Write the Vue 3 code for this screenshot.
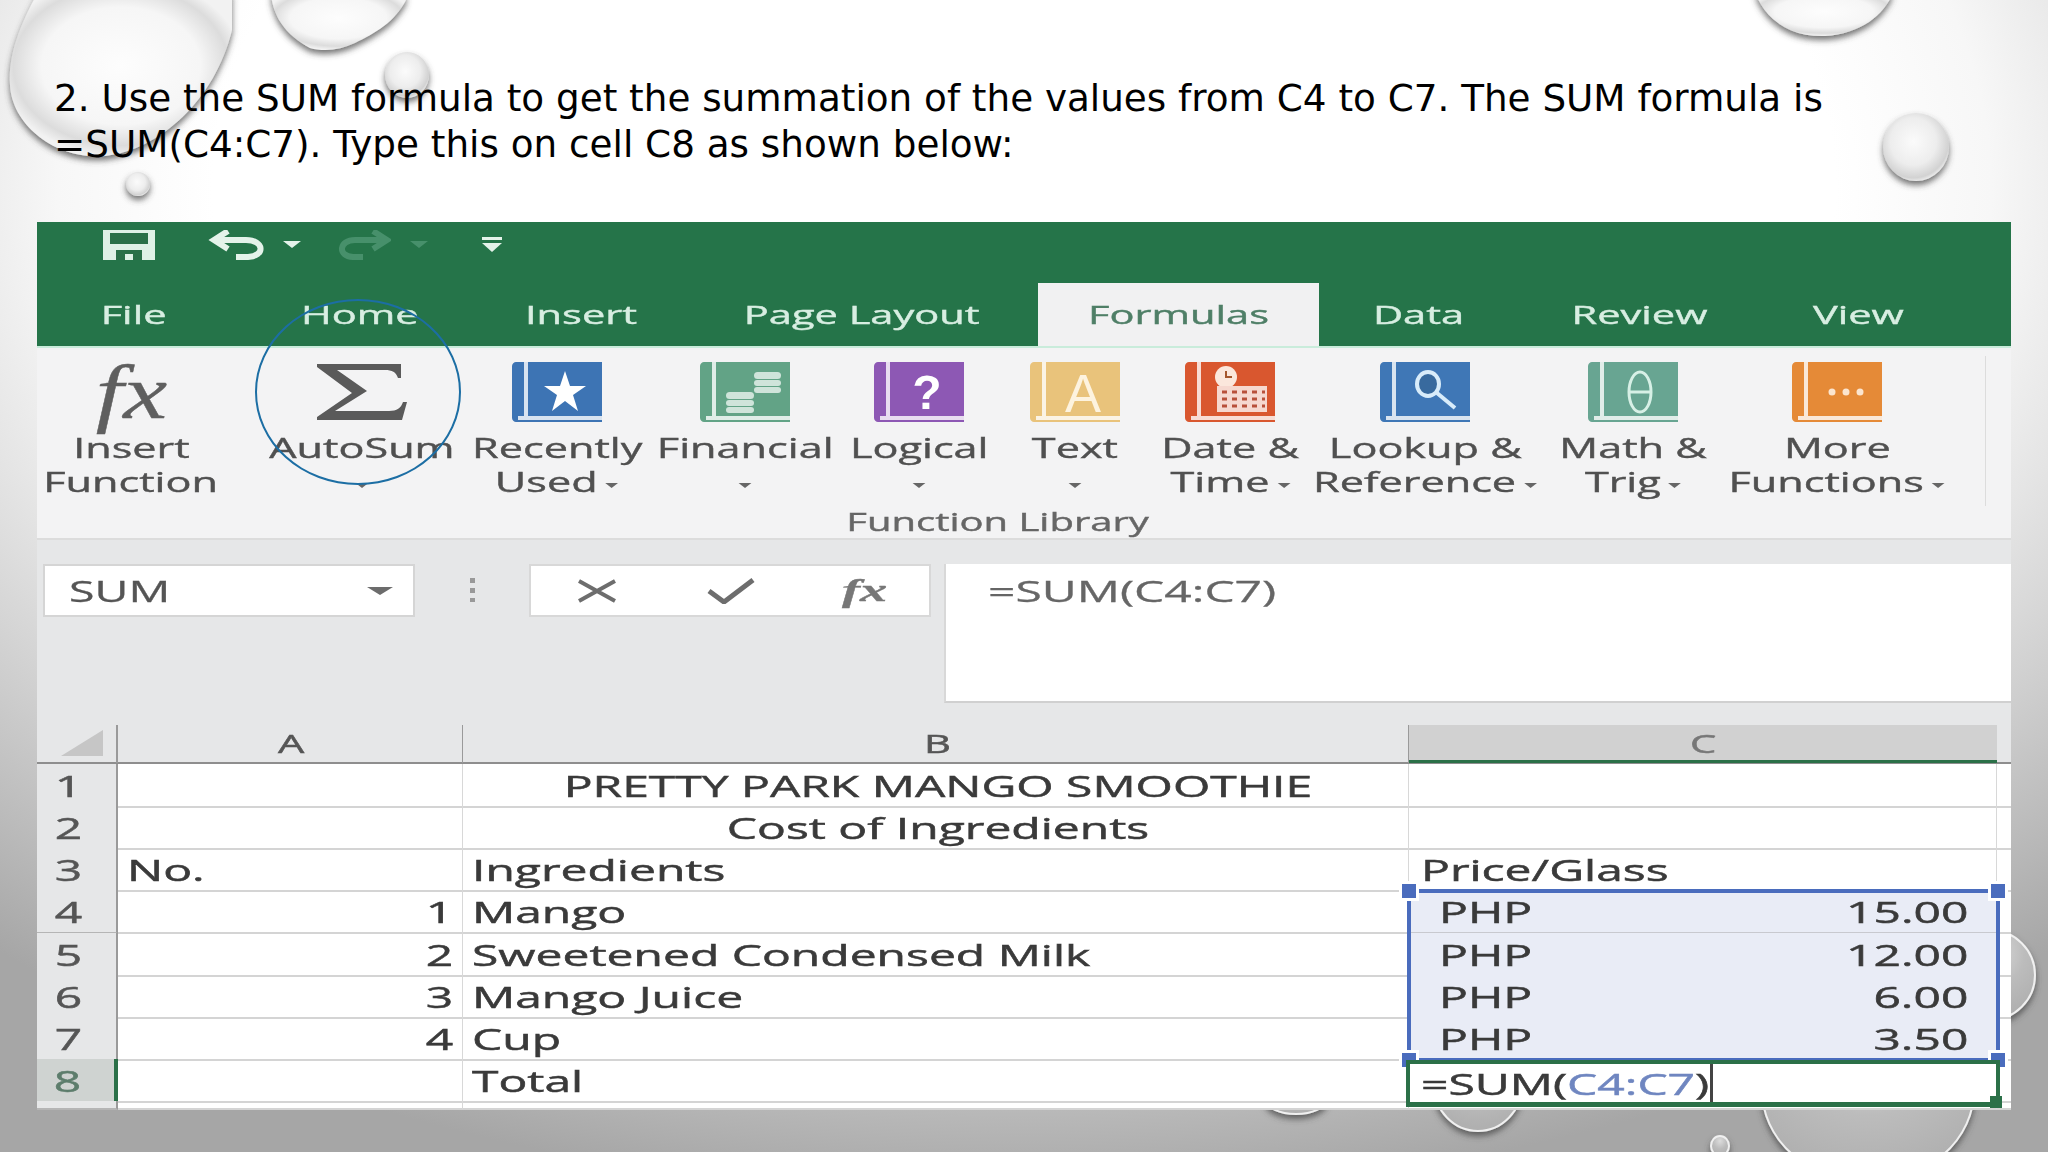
<template>
  <div class="slide">
    <svg class="drops" width="2048" height="1152" viewBox="0 0 2048 1152">
      <defs>
        <radialGradient id="dropFill" cx="50%" cy="45%" r="55%">
          <stop offset="0%" stop-color="#fdfdfd" />
          <stop offset="65%" stop-color="#f6f6f6" />
          <stop offset="88%" stop-color="#dcdcdc" />
          <stop offset="100%" stop-color="#f2f2f2" />
        </radialGradient>
        <radialGradient id="dropSmall" cx="46%" cy="42%" r="58%">
          <stop offset="0%" stop-color="#fbfbfb" />
          <stop offset="60%" stop-color="#ededed" />
          <stop offset="92%" stop-color="#d2d2d2" />
          <stop offset="100%" stop-color="#e8e8e8" />
        </radialGradient>
        <radialGradient id="dropDark" cx="50%" cy="25%" r="70%">
          <stop offset="0%" stop-color="#dcdcdc" />
          <stop offset="55%" stop-color="#bcbcbc" />
          <stop offset="100%" stop-color="#b0b0b0" />
        </radialGradient>
        <filter id="dropShadow" x="-20%" y="-20%" width="140%" height="140%">
          <feDropShadow dx="0" dy="4" stdDeviation="3" flood-color="#444" flood-opacity="0.75" />
        </filter>
      </defs>
      <g filter="url(#dropShadow)" fill="url(#dropFill)">
        <path d="M38 -8C20 25 8 55 10 85C12 125 55 160 105 156C160 150 215 100 232 30L232 -8Z" />
        <path d="M271 -8C272 15 285 35 310 48C325 52 340 50 355 43C375 33 395 22 406 0L406 -8Z" />
        <path d="M1755 -8C1765 20 1790 37 1825 36C1860 34 1885 15 1893 -8Z" />
      </g>
      <g filter="url(#dropShadow)" fill="url(#dropSmall)">
        <ellipse cx="407" cy="75" rx="22" ry="23" />
        <ellipse cx="138" cy="184" rx="12" ry="12" />
        <ellipse cx="1916" cy="147" rx="33" ry="34" />
      </g>
      <g filter="url(#dropShadow)" fill="url(#dropDark)" stroke="#f0f0f0" stroke-width="2">
        <ellipse cx="1990" cy="975" rx="45" ry="45" />
        <ellipse cx="1478" cy="1085" rx="44" ry="46" />
        <ellipse cx="1868" cy="1090" rx="106" ry="92" />
        <ellipse cx="1296" cy="1100" rx="30" ry="14" />
        <ellipse cx="1720" cy="1146" rx="9" ry="10" />
      </g>
    </svg>

    <p class="heading">
      2. Use the SUM formula to get the summation of the values from C4 to C7. The SUM formula is<br />
      =SUM(C4:C7). Type this on cell C8 as shown below:
    </p>

    <div class="panel">
      <div class="title-bar soft">
        <div class="qat">
          <svg class="qat-icon" width="52" height="30" viewBox="0 0 52 30">
            <path fill="#dff1e6" d="M0 0H52V30H0Z" />
            <path fill="#2a7048" d="M7 3H45V14H7Z" />
            <path fill="#2a7048" d="M13 20H39V30H30V24H22V30H13Z" />
          </svg>
          <svg class="undo" width="60" height="30" viewBox="0 0 60 30">
            <path fill="none" stroke="#e4f3ea" stroke-width="6" d="M6 10H38C56 10 58 26 40 27H28" />
            <path fill="none" stroke="#e4f3ea" stroke-width="6" d="M20 1L6 10L20 19" />
          </svg>
          <i class="tri qat-tri first" />
          <svg class="redo" width="54" height="30" viewBox="0 0 54 30">
            <path fill="none" stroke="#47906b" stroke-width="6" d="M48 10H18C2 10 0 26 16 27H26" />
            <path fill="none" stroke="#47906b" stroke-width="6" d="M36 1L50 10L36 19" />
          </svg>
          <i class="tri qat-tri dim" />
          <span class="customize"><b /><i class="tri" /></span>
        </div>
        <div class="tabs">
          <div v-for="tab in tabs" :key="tab" class="tab" :class="{ active: tab === 'Formulas' }">
            <span class="wide">{{ tab }}</span>
          </div>
        </div>
      </div>

      <div class="ribbon soft">
        <div class="ribbon-items">
          <div v-for="item in ribbonItems" :key="item.top" class="tool">
            <div class="tool-icon">
              <span v-if="item.icon === 'fx'" class="fx">fx</span>
              <svg v-else-if="item.icon === 'sum'" width="90" height="56" viewBox="0 0 90 56">
                <path fill="#5a5a5a" d="M0 0H84V14H81C79 8 75 6 68 6H20L50 27L18 47H72C80 47 84 44 86 38H90L85 56H0V53L35 29L0 3Z" />
              </svg>
              <svg v-else width="90" height="60" viewBox="0 0 90 60">
                <path :fill="item.color" d="M4 0H90V60H4C2 60 0 58 0 56V4C0 2 2 0 4 0Z" />
                <path fill="#fff" opacity="0.8" d="M12 0H16V54H90V58H6V54H12Z" />
                <path v-if="item.icon === 'star'" fill="#fff" d="M53 9L58 24L74 24L61 33L66 49L53 39L40 49L45 33L32 24L48 24Z" />
                <g v-if="item.icon === 'coins'" fill="#cfe4da">
                  <rect x="26" y="30" width="28" height="7" rx="3.5" />
                  <rect x="26" y="38" width="28" height="6" rx="3" />
                  <rect x="26" y="45" width="28" height="6" rx="3" />
                  <rect x="54" y="10" width="27" height="7" rx="3.5" />
                  <rect x="54" y="18" width="27" height="6" rx="3" />
                  <rect x="54" y="25" width="27" height="6" rx="3" />
                </g>
                <text v-if="item.icon === 'help'" x="53" y="47" class="book-letter">?</text>
                <text v-if="item.icon === 'letter'" x="53" y="50" class="book-letter thin">A</text>
                <g v-if="item.icon === 'date'">
                  <circle cx="41" cy="15" r="11" fill="#fbe7dc" />
                  <path fill="none" stroke="#a5562c" stroke-width="2" d="M41 9V15H47" />
                  <path fill="#f6d8cf" d="M32 24H82V50H32Z" />
                  <path stroke="#b8503a" stroke-width="3" stroke-dasharray="5 5" d="M37 30H80M37 37H80M37 44H80" />
                </g>
                <g v-if="item.icon === 'search'" fill="none" stroke="#d8ecfa" stroke-width="4">
                  <ellipse cx="48" cy="22" rx="11" ry="12" fill="#386a9e" />
                  <path d="M57 31L75 46" />
                </g>
                <g v-if="item.icon === 'theta'" fill="none" stroke="#d7f0e6" stroke-width="3">
                  <ellipse cx="52" cy="30" rx="11" ry="20" />
                  <path d="M41 30H63" />
                </g>
                <g v-if="item.icon === 'more'" fill="#fbe5cf">
                  <circle cx="40" cy="30" r="3.5" />
                  <circle cx="54" cy="30" r="3.5" />
                  <circle cx="68" cy="30" r="3.5" />
                </g>
              </svg>
            </div>
            <span class="wide tool-line">{{ item.top }}</span>
            <span class="wide tool-line">{{ item.bottom }}<i v-if="item.icon !== 'fx'" class="tri" :class="{ spaced: item.bottom }" /></span>
          </div>
          <div class="ribbon-stub"><span class="stub-mark" /></div>
        </div>
        <div class="group-name"><span class="wide">Function Library</span></div>
      </div>

      <div class="formula-bar soft">
        <div class="name-box">
          <span class="wide left name-text">SUM</span>
          <i class="tri" />
        </div>
        <span class="grip" />
        <div class="fx-box">
          <svg width="42" height="26" viewBox="0 0 42 26">
            <path fill="none" stroke="#6d6d6d" stroke-width="4" d="M3 3L39 23M39 3L3 23" />
          </svg>
          <svg class="check" width="48" height="26" viewBox="0 0 48 26">
            <path fill="none" stroke="#6d6d6d" stroke-width="5" d="M2 13L17 24L46 2" />
          </svg>
          <span class="box-fx">fx</span>
        </div>
        <div class="formula-input"><span class="wide left">=SUM(C4:C7)</span></div>
      </div>

      <div class="sheet soft">
        <div class="head-row">
          <div class="corner">
            <svg width="42" height="26" viewBox="0 0 42 26"><path fill="#c6c6c6" d="M42 0V26H0Z" /></svg>
          </div>
          <div class="col-head"><span class="wide">A</span></div>
          <div class="col-head"><span class="wide">B</span></div>
          <div class="col-head on"><span class="wide">C</span></div>
        </div>
        <div v-for="row in rows" :key="row.id" class="row">
          <div class="row-head" :class="{ on: row.id === 8 }"><span class="wide">{{ row.id }}</span></div>
          <div class="cell" :class="row.aClass"><span class="wide" :class="row.aClass">{{ row.a }}</span></div>
          <div class="cell" :class="row.bClass"><span class="wide" :class="row.bClass">{{ row.b }}</span></div>
          <div class="cell c-cell" :class="{ picked: row.price }">
            <template v-if="row.price">
              <span class="wide left">PHP</span>
              <span class="wide right">{{ row.price }}</span>
            </template>
            <span v-else class="wide left">{{ row.c }}</span>
          </div>
          <div class="cell-end" />
        </div>
        <div class="row last">
          <div class="row-head" />
          <div class="cell" />
          <div class="cell" />
          <div class="cell" />
          <div class="cell-end" />
        </div>

        <div class="range-box">
          <i class="handle tl" /><i class="handle tr" /><i class="handle bl" /><i class="handle br" />
        </div>
        <div class="edit-box">
          <span class="wide left edit-text">=SUM(<em>C4:C7</em>)</span>
          <span class="caret" />
          <i class="fill-handle" />
        </div>
      </div>

      <div class="autosum-ring" />
    </div>
  </div>
</template>

<script setup>
const tabs = ['File', 'Home', 'Insert', 'Page Layout', 'Formulas', 'Data', 'Review', 'View']

const ribbonItems = [
  { top: 'Insert', bottom: 'Function', icon: 'fx' },
  { top: 'AutoSum', bottom: '', icon: 'sum' },
  { top: 'Recently', bottom: 'Used', icon: 'star', color: '#3d74b4' },
  { top: 'Financial', bottom: '', icon: 'coins', color: '#62a386' },
  { top: 'Logical', bottom: '', icon: 'help', color: '#8d58b4' },
  { top: 'Text', bottom: '', icon: 'letter', color: '#e9c37b' },
  { top: 'Date &', bottom: 'Time', icon: 'date', color: '#d9572f' },
  { top: 'Lookup &', bottom: 'Reference', icon: 'search', color: '#3f77b6' },
  { top: 'Math &', bottom: 'Trig', icon: 'theta', color: '#68a592' },
  { top: 'More', bottom: 'Functions', icon: 'more', color: '#e58a37' }
]

const rows = [
  { id: 1, a: '', b: 'PRETTY PARK MANGO SMOOTHIE', bClass: 'center', c: '' },
  { id: 2, a: '', b: 'Cost of Ingredients', bClass: 'center', c: '' },
  { id: 3, a: 'No.', aClass: 'left', b: 'Ingredients', bClass: 'left', c: 'Price/Glass' },
  { id: 4, a: '1', aClass: 'right', b: 'Mango', bClass: 'left', price: '15.00' },
  { id: 5, a: '2', aClass: 'right', b: 'Sweetened Condensed Milk', bClass: 'left', price: '12.00' },
  { id: 6, a: '3', aClass: 'right', b: 'Mango Juice', bClass: 'left', price: '6.00' },
  { id: 7, a: '4', aClass: 'right', b: 'Cup', bClass: 'left', price: '3.50' },
  { id: 8, a: '', b: 'Total', bClass: 'left', c: '' }
]
</script>

<style>
html,
body {
  margin: 0;
  background: #fff;
}
</style>

<style scoped>
.slide {
  position: relative;
  width: 2048px;
  height: 1152px;
  overflow: hidden;
  background: radial-gradient(ellipse 1560px 1010px at 50% 190px, #fff 52%, #f7f7f7 62%, #a6a6a6 100%);
  font-family: "Open Sans", "Liberation Sans", sans-serif;
}

.drops {
  position: absolute;
  left: 0;
  top: 0;
}

.heading {
  position: relative;
  margin: 0;
  height: 222px;
  box-sizing: border-box;
  padding: 75px 0 0 54px;
  font-family: "DejaVu Sans", sans-serif;
  font-size: 37.3px;
  line-height: 46px;
  color: #000;
  white-space: nowrap;
}

.panel {
  position: relative;
  width: 1974px;
  margin-left: 37px;
}

.soft {
  filter: blur(0.5px);
}

.wide {
  display: inline-block;
  transform: scaleX(1.6);
  white-space: nowrap;
}

.wide.left {
  transform-origin: left center;
}

.wide.right {
  transform-origin: right center;
}

.tri {
  display: inline-block;
  width: 0;
  height: 0;
  border-left: 6px solid transparent;
  border-right: 6px solid transparent;
  border-top: 6px solid #666;
  vertical-align: middle;
}

/* title bar */
.title-bar {
  height: 124px;
  background: #257449;
  border-bottom: 2px solid #c9ecdb;
}

.qat {
  display: flex;
  align-items: center;
  height: 45px;
  margin-bottom: 16px;
  padding-left: 66px;
}

.undo {
  margin-left: 53px;
}

.qat-tri {
  margin-left: 19px;
  border-left-width: 9px;
  border-right-width: 9px;
  border-top: 7px solid #e4f3ea;
}

.qat-tri.first {
  margin-left: 15px;
}

.qat-tri.dim {
  border-top-color: #47906b;
}

.redo {
  margin-left: 36px;
}

.customize {
  display: flex;
  flex-direction: column;
  align-items: center;
  gap: 3px;
  margin-left: 54px;
}

.customize b {
  width: 20px;
  height: 3px;
  background: #e4f3ea;
}

.customize .tri {
  border-left-width: 10px;
  border-right-width: 10px;
  border-top: 9px solid #e4f3ea;
}

.tabs {
  display: grid;
  grid-template-columns: 194px 258px 184px 365px 281px 200px 240px 198px;
  height: 63px;
}

.tab {
  display: flex;
  align-items: center;
  justify-content: center;
  padding-bottom: 2px;
  box-sizing: border-box;
  font-size: 26px;
  -webkit-text-stroke: 0.4px currentColor;
  color: #d8eee2;
}

.tab:nth-child(4) {
  padding-left: 12px;
}

.tab.active {
  background: #f1f1f2;
  color: #4f7f67;
}

/* ribbon */
.ribbon {
  height: 192px;
  background: #f3f3f4;
  border-bottom: 2px solid #dcdcdc;
  box-sizing: border-box;
  color: #505050;
  font-size: 27px;
  -webkit-text-stroke: 0.4px currentColor;
}

.ribbon-items {
  display: grid;
  grid-template-columns: 188px 274px 116px 260px 88px 224px 86px 304px 112px 296px 26px;
  height: 158px;
  padding-top: 14px;
  box-sizing: border-box;
}

.tool {
  display: flex;
  flex-direction: column;
  align-items: center;
  min-width: 0;
}

.tool-icon {
  display: flex;
  align-items: center;
  justify-content: center;
  height: 60px;
  margin-bottom: 9px;
}

.tool-line {
  height: 34px;
  line-height: 34px;
}

.tool-line .tri {
  margin-top: 2px;
  border-left-width: 4px;
  border-right-width: 4px;
  border-top-width: 5px;
}

.tri.spaced {
  margin-left: 5px;
}

.fx {
  display: inline-block;
  transform: scaleX(1.3);
  font-family: "Liberation Serif", serif;
  font-style: italic;
  font-size: 76px;
  line-height: 60px;
  color: #5f5f5f;
}

.book-letter {
  fill: #fff;
  font-family: "Liberation Sans", sans-serif;
  font-size: 48px;
  font-weight: 700;
  text-anchor: middle;
}

.book-letter.thin {
  font-weight: 400;
  font-size: 54px;
  fill: #fdf3df;
}

.ribbon-stub {
  display: flex;
  align-items: flex-end;
  padding-bottom: 26px;
  border-left: 1px solid #dcdcdc;
  margin-top: -6px;
  padding-left: 30px;
}

.stub-mark {
  width: 4px;
  height: 18px;
  background: #b4b4b4;
}

.group-name {
  display: flex;
  justify-content: center;
  height: 32px;
  padding-right: 52px;
  font-size: 25px;
  line-height: 30px;
  color: #666;
}

/* formula bar */
.formula-bar {
  display: flex;
  align-items: flex-start;
  height: 185px;
  padding: 24px 0 0 6px;
  box-sizing: border-box;
  background: #e6e7e8;
  color: #555;
  -webkit-text-stroke: 0.3px currentColor;
}

.name-box {
  display: flex;
  align-items: center;
  justify-content: space-between;
  width: 372px;
  height: 53px;
  padding: 0 24px;
  box-sizing: border-box;
  background: #fff;
  border: 2px solid #d5d5d5;
}

.name-text {
  font-size: 30px;
  transform: scaleX(1.55);
}

.name-box .tri {
  border-left-width: 13px;
  border-right-width: 13px;
  border-top: 8px solid #6c6c6c;
  margin-right: -4px;
}

.grip {
  width: 5px;
  height: 24px;
  margin: 14px 54px 0 55px;
  background: repeating-linear-gradient(#999 0 5px, transparent 5px 10px);
}

.fx-box {
  display: flex;
  align-items: center;
  width: 402px;
  height: 53px;
  padding-left: 45px;
  box-sizing: border-box;
  background: #fff;
  border: 2px solid #d8d8d8;
}

.check {
  margin-left: 89px;
}

.box-fx {
  display: inline-block;
  margin-left: 87px;
  transform: scaleX(1.7);
  transform-origin: left center;
  font-family: "Liberation Serif", serif;
  font-style: italic;
  font-weight: 700;
  font-size: 32px;
  color: #777;
}

.formula-input {
  width: 1068px;
  height: 139px;
  margin-left: 13px;
  padding: 6px 0 0 42px;
  box-sizing: border-box;
  background: #fff;
  border-left: 2px solid #d8d8d8;
  border-bottom: 2px solid #d0d0d0;
  font-size: 30px;
  color: #666;
}

/* sheet */
.sheet {
  position: relative;
  background: #fff;
  font-family: "Open Sans", Lato, sans-serif;
  font-size: 30px;
  color: #3a3a3a;
  -webkit-text-stroke: 0.5px currentColor;
}

.head-row,
.row {
  display: grid;
  grid-template-columns: 81px 345px 946px 588px 14px;
}

.head-row {
  height: 39px;
  background: #e6e7e8;
  border-bottom: 2px solid #8e8e8e;
  box-sizing: border-box;
  grid-template-columns: 81px 345px 946px 588px;
}

.corner {
  display: flex;
  justify-content: flex-end;
  padding: 5px 13px 0 0;
  box-sizing: border-box;
  border-right: 2px solid #9a9a9a;
}

.col-head {
  display: flex;
  align-items: center;
  justify-content: center;
  padding: 0 0 2px 3px;
  box-sizing: border-box;
  border-right: 1px solid #9a9a9a;
  color: #555;
  font-size: 26px;
}

.col-head.on {
  background: #d1d1d1;
  padding-left: 0;
  color: #777;
  border-right: 0;
  box-shadow: inset 0 -3px 0 #2b7048;
}

.row {
  height: 42.15px;
}

.row.last {
  height: 9px;
}

.row-head {
  display: flex;
  align-items: center;
  justify-content: center;
  padding: 1px 16px 0 0;
  background: #e6e7e8;
  border-right: 2px solid #9a9a9a;
  border-bottom: 2px solid #b5b5b5;
  box-sizing: border-box;
  color: #555;
}

.row-head.on {
  background: #cfd3d1;
  border-right: 4px solid #2b7048;
  color: #5d7d6c;
}

.cell {
  display: flex;
  align-items: center;
  padding: 1px 9px 0;
  box-sizing: border-box;
  border-right: 1px solid #d8d8d8;
  border-bottom: 2px solid #d4d4d4;
  white-space: nowrap;
}

.cell.center {
  justify-content: center;
  padding-left: 14px;
}

.cell.right {
  justify-content: flex-end;
}

.cell-end {
  border-bottom: 2px solid #d4d4d4;
}

.c-cell {
  justify-content: space-between;
  padding: 1px 28px 0 12px;
}

.c-cell.picked {
  padding-left: 30px;
  background: #e9ecf6;
  border-bottom-color: #c8c9cf;
}

.range-box {
  position: absolute;
  left: 1370px;
  top: 164px;
  width: 593px;
  height: 173px;
  box-sizing: border-box;
  border: 4px solid #4a6cbd;
}

.handle {
  position: absolute;
  width: 14px;
  height: 14px;
  background: #4a6cbd;
  outline: 3px solid #fff;
}

.handle.tl { left: -9px; top: -9px; }
.handle.tr { right: -9px; top: -9px; }
.handle.bl { left: -9px; bottom: -9px; }
.handle.br { right: -9px; bottom: -9px; }

.edit-box {
  position: absolute;
  left: 1369px;
  top: 335px;
  width: 594px;
  height: 47px;
  padding: 1px 0 0 11px;
  box-sizing: border-box;
  display: flex;
  align-items: center;
  background: #fff;
  border: 4px solid #2b7048;
  border-bottom-width: 5px;
}

.edit-text em {
  font-style: normal;
  color: #6f86c0;
}

.caret {
  position: absolute;
  left: 300px;
  top: 0;
  bottom: 0;
  width: 3px;
  background: #444;
}

.fill-handle {
  position: absolute;
  right: -6px;
  bottom: -6px;
  width: 12px;
  height: 12px;
  background: #2b7048;
}

.autosum-ring {
  position: absolute;
  left: 218px;
  top: 77px;
  width: 206px;
  height: 186px;
  box-sizing: border-box;
  border: 2px solid #1c6ea4;
  border-radius: 50%;
}
</style>
